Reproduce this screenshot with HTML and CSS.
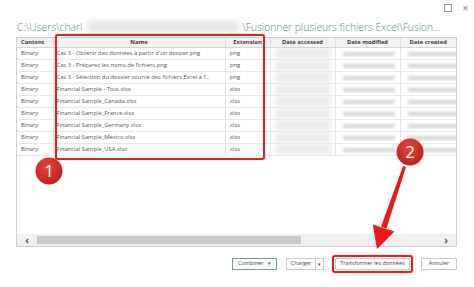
FILE: index.html
```html
<html>
  <head>
    <link rel="stylesheet" href="styles.css">
  </head>
  <body>
    <div class="dialog">
      <div class="controls">
        <span class="max"></span>
        <span class="close">✕</span>
      </div>
      <div class="title">
        <span>C:\Users\charl</span>
        <span class="smudge"></span>
        <span>\Fusionner plusieurs fichiers Excel\Fusion...</span>
      </div>

      <div class="frame">
        <table class="grid">
          <colgroup>
            <col class="c-content">
            <col class="c-name">
            <col class="c-ext">
            <col class="c-acc">
            <col class="c-mod">
            <col class="c-cre">
          </colgroup>
          <thead>
            <tr>
              <th>Content</th>
              <th>Name</th>
              <th>Extension</th>
              <th>Date accessed</th>
              <th>Date modified</th>
              <th>Date created</th>
            </tr>
          </thead>
          <tbody id="rows">
          </tbody>
        </table>
        <div class="filler"></div>
        <div class="hscroll">
          <span class="arrow">‹</span>
          <div class="track"><div class="thumb"></div></div>
          <span class="arrow">›</span>
        </div>
      </div>

      <div class="actions">
        <button class="btn combine">Combiner <span class="caret">▾</span></button>
        <div class="split">
          <button class="btn">Charger</button>
          <button class="btn drop"><span class="caret">▾</span></button>
        </div>
        <span class="hilite"><button class="btn">Transformer les données</button></span>
        <button class="btn cancel">Annuler</button>
      </div>

      <div class="mark"></div>
      <svg class="overlay" width="474" height="287" viewBox="0 0 474 287">
        <defs>
          <radialGradient id="ball" cx="45%" cy="35%" r="70%">
            <stop offset="0" stop-color="#e8473f"/>
            <stop offset="1" stop-color="#b81f1c"/>
          </radialGradient>
        </defs>
        <polygon points="403,166 406,167 386.5,228.5 381,226.8" fill="#e81a1a"/>
        <polygon points="377,249 394.5,231.5 372.8,224.5" fill="#e81a1a"/>
        <circle cx="49" cy="171" r="13.5" fill="url(#ball)"/>
        <circle cx="410" cy="152" r="13.5" fill="url(#ball)"/>
        <text x="49" y="177" class="num">1</text>
        <text x="410" y="158" class="num">2</text>
      </svg>
    </div>

  <script>
    const files = [
      { name: 'Cas 3 - Obtenir des données à partir d\'un dossier.png', ext: '.png' },
      { name: 'Cas 3 - Préparez les noms de fichiers.png', ext: '.png' },
      { name: 'Cas 3 - Sélection du dossier source des fichiers Excel à f...', ext: '.png' },
      { name: 'Financial Sample - Tout.xlsx', ext: '.xlsx' },
      { name: 'Financial Sample_Canada.xlsx', ext: '.xlsx' },
      { name: 'Financial Sample_France.xlsx', ext: '.xlsx' },
      { name: 'Financial Sample_Germany.xlsx', ext: '.xlsx' },
      { name: 'Financial Sample_Mexico.xlsx', ext: '.xlsx' },
      { name: 'Financial Sample_USA.xlsx', ext: '.xlsx' },
    ];

    const rows = document.querySelector('#rows');
    rows.innerHTML = files.map(file => `
      <tr>
        <td>Binary</td>
        <td>${ file.name }</td>
        <td>${ file.ext }</td>
        <td class="acc"><span class="haze"></span></td>
        <td><span class="fog"></span></td>
        <td><span class="fog wide"></span></td>
      </tr>
    `).join('');
  </script>
  </body>
</html>
```

FILE: styles.css
```css
body {
  margin: 0;
  background: #fff;
  font-family: "Open Sans", sans-serif;
}

.dialog {
  position: relative;
  width: 474px;
  height: 287px;
  padding: 0 17px 0 16px;
  box-sizing: border-box;
  overflow: hidden;
}

.controls {
  display: flex;
  justify-content: flex-end;
  align-items: center;
  gap: 10px;
  height: 16px;
  margin-right: -12px;
  color: #8a8a8a;
}

.max {
  width: 6px;
  height: 6px;
  border: solid 1px #9a9a9a;
}

.close {
  font-size: 8px;
  line-height: 1;
}

.title {
  display: flex;
  align-items: center;
  height: 21px;
  font-size: 10.3px;
  font-weight: 300;
  color: #5b8a72;
  white-space: nowrap;
  padding-left: 1px;
}

.smudge {
  display: inline-block;
  width: 152px;
  height: 12px;
  margin: 0 3px 0 5px;
  background: #e4e4e4;
  filter: blur(3px);
}

.frame {
  display: flex;
  flex-direction: column;
  height: 210px;
  border: solid 1px #cfcfcf;
  box-sizing: border-box;
}

.grid {
  table-layout: fixed;
  border-collapse: collapse;
  width: 439px;
  font-size: 5.8px;
  color: #555;
}

.c-content { width: 36px; }
.c-name { width: 172px; }
.c-ext { width: 45px; }
.c-acc { width: 65px; }
.c-mod { width: 65px; }
.c-cre { width: 56px; }

.grid th {
  height: 9px;
  line-height: 9px;
  background: #f3f3f3;
  font-weight: 700;
  color: #3a3a3a;
  border-right: solid 1px #dedede;
  border-bottom: solid 1px #d4d4d4;
  padding: 0;
  text-align: center;
}

.grid th:first-child {
  text-align: left;
  padding-left: 4px;
}

.grid td {
  height: 11px;
  line-height: 11px;
  padding: 0 0 0 3px;
  border-right: solid 1px #e4e4e4;
  border-bottom: solid 1px #e8e8e8;
  white-space: nowrap;
  overflow: hidden;
}

.grid td:first-child {
  padding-left: 4px;
}

.grid th:last-child,
.grid td:last-child {
  border-right: none;
}

.grid td.acc {
  padding: 0;
}

.haze {
  display: block;
  width: 56px;
  height: 11px;
  margin-left: 4px;
  background: #ebebeb;
  filter: blur(2.5px);
}

.fog {
  display: block;
  width: 52px;
  height: 4px;
  margin-left: 4px;
  background: #d4d4d4;
  filter: blur(1.6px);
}

.fog.wide {
  width: 58px;
}

.filler {
  flex: 1;
}

.hscroll {
  display: flex;
  align-items: center;
  height: 12px;
  background: #f0f0f0;
  color: #555;
  font-size: 10px;
  font-weight: 700;
}

.arrow {
  width: 20px;
  text-align: center;
  line-height: 12px;
}

.track {
  flex: 1;
  height: 8px;
}

.thumb {
  width: 264px;
  height: 100%;
  background: #c9c9c9;
}

.actions {
  display: flex;
  justify-content: flex-end;
  align-items: center;
  gap: 8px;
  margin-top: 8px;
}

.btn {
  height: 12px;
  padding: 0 4px;
  border: solid 1px #c9c9c9;
  background: #fff;
  font-family: "Open Sans", sans-serif;
  font-size: 5.5px;
  color: #444;
  line-height: 1;
}

.btn.combine {
  border-color: #73a088;
  padding: 0 5px;
  margin-right: 1px;
}

.btn.cancel {
  padding: 0 7px;
}

.caret {
  font-size: 5px;
  margin-left: 3px;
}

.split {
  display: flex;
}

.split .drop {
  padding: 0 2px;
  border-left: none;
}

.split .drop .caret {
  margin: 0;
}

.hilite {
  display: flex;
  padding: 1px;
  border: solid 2px #e0201e;
  border-radius: 3px;
  box-shadow: 0 0 1px #e0201e;
}

.mark {
  position: absolute;
  left: 55px;
  top: 34px;
  width: 206px;
  height: 122px;
  border: solid 2px #e0201e;
  border-radius: 3px;
  box-shadow: 0 0 1px #e0201e;
}

.overlay {
  position: absolute;
  left: 0;
  top: 0;
  pointer-events: none;
}

.num {
  font-family: "Open Sans", sans-serif;
  font-size: 17px;
  fill: #fff;
  text-anchor: middle;
}
```
